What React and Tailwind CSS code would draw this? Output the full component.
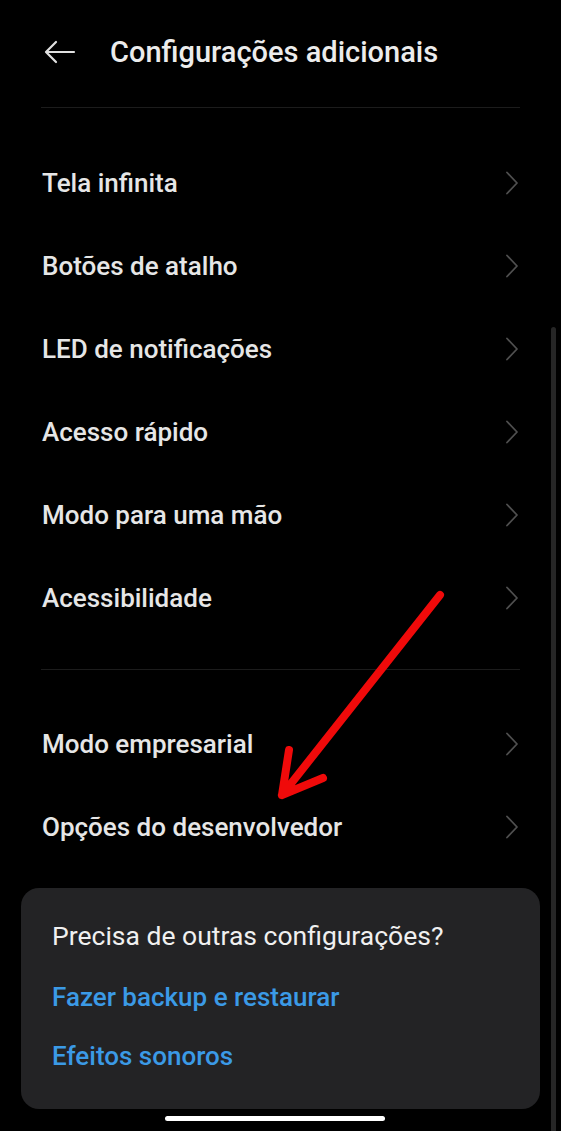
import React from "react";

const mainItems = [
  "Tela infinita",
  "Botões de atalho",
  "LED de notificações",
  "Acesso rápido",
  "Modo para uma mão",
  "Acessibilidade",
];

const otherItems = ["Modo empresarial", "Opções do desenvolvedor"];

const Chevron = () => (
  <svg width="14" height="24" viewBox="0 0 14 24" fill="none" className="shrink-0">
    <path d="M2 1.5 L12 12 L2 22.5" stroke="#4f4f4f" strokeWidth="1.8" strokeLinecap="round" strokeLinejoin="round" />
  </svg>
);

const Row = ({ label }) => (
  <div className="flex h-[83px] items-center justify-between">
    <span className="text-[26px] leading-[32px] font-medium text-[#e6e6e6]">{label}</span>
    <Chevron />
  </div>
);

const App = () => {
  return (
    <div
      className="relative h-[1131px] w-[561px] overflow-hidden bg-black"
      style={{ fontFamily: "Roboto, 'Noto Sans', sans-serif" }}
    >
      {/* header */}
      <div className="mx-[41px] flex h-[108px] items-center border-b border-[#1c1c1c] pb-[3px]">
        <svg width="32" height="24" viewBox="0 0 32 24" fill="none" className="ml-[3px]">
          <path d="M30 12 H3 M12 2 L2 12 L12 22" stroke="#e0e0e0" strokeWidth="2.2" strokeLinecap="round" strokeLinejoin="round" />
        </svg>
        <h1 className="ml-[34px] text-[29px] leading-[34px] font-medium text-[#ececec]">Configurações adicionais</h1>
      </div>

      <div className="mx-[42px] pt-[33px]">
        {mainItems.map((item) => (
          <Row key={item} label={item} />
        ))}
      </div>

      <div className="mx-[41px] mt-[30px] border-t border-[#1c1c1c]" />

      <div className="mx-[42px] pt-[32px]">
        {otherItems.map((item) => (
          <Row key={item} label={item} />
        ))}
      </div>

      {/* suggestions card */}
      <div className="mx-[21px] mt-[20px] flex h-[221px] flex-col rounded-[18px] bg-[#232325] px-[31px] pt-[33px]">
        <p className="text-[26.5px] leading-[30px] text-[#f0f0f0]">Precisa de outras configurações?</p>
        <p className="mt-[31px] text-[26px] leading-[30px] font-medium text-[#3b9ae6]">Fazer backup e restaurar</p>
        <p className="mt-[29px] text-[26px] leading-[30px] font-medium text-[#3b9ae6]">Efeitos sonoros</p>
      </div>

      {/* home indicator */}
      <div className="absolute bottom-[10px] left-[165px] h-[5px] w-[220px] rounded-full bg-white" />

      {/* scrollbar */}
      <div className="absolute right-[5px] top-[327px] h-[804px] w-[5px] rounded-t-full bg-[#262626]" />

      {/* red annotation arrow */}
      <svg className="pointer-events-none absolute left-0 top-0" width="561" height="1131" viewBox="0 0 561 1131" fill="none">
        <path
          d="M440 595 L282 795 M289 750 L282 795 L323 778"
          stroke="#f00a0a"
          strokeWidth="8"
          strokeLinecap="round"
          strokeLinejoin="round"
        />
      </svg>
    </div>
  );
};

export default App;
